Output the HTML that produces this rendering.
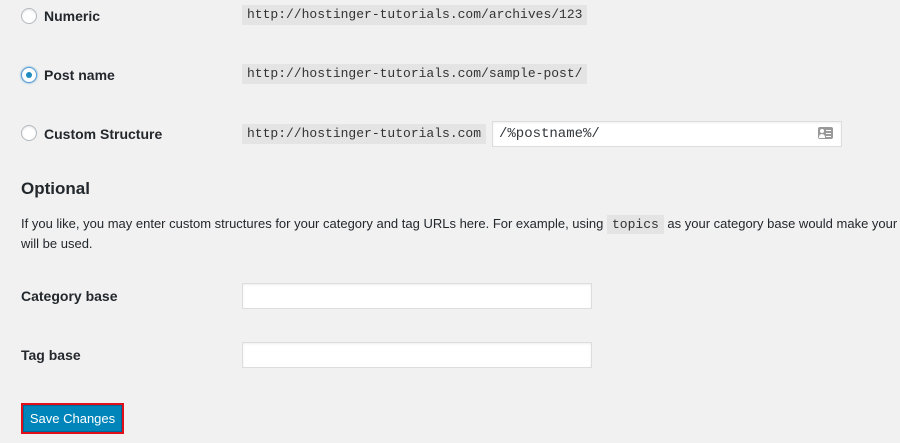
<!DOCTYPE html>
<html><head><style>
body{margin:0;width:900px;height:443px;background:#f1f1f1;font-family:"Liberation Sans","DejaVu Sans",sans-serif;color:#23282d;position:relative;overflow:hidden}
.a{position:absolute}
.radio{width:14px;height:14px;border:1px solid #b4b9be;border-radius:50%;background:#fff;box-shadow:inset 0 1px 2px rgba(0,0,0,.1)}
.radio.on{border-color:#5b9dd9;box-shadow:0 0 2px rgba(30,140,190,.8)}
.radio.on:after{content:"";position:absolute;left:4px;top:4px;width:6px;height:6px;border-radius:50%;background:#1e8cbe}
.lbl{font-weight:bold;font-size:14px;white-space:nowrap}
code{position:absolute;background:#e4e4e4;font-family:"Liberation Mono","DejaVu Sans Mono",monospace;font-size:13px;padding:3px 5px;line-height:14px;white-space:nowrap;color:#333}
.inp{background:#fff;border:1px solid #ddd;box-shadow:inset 0 1px 2px rgba(0,0,0,.07)}
p{margin:0;font-size:13px;line-height:19px;white-space:nowrap}
</style></head><body>
<div class="a radio" style="left:21px;top:8px"></div><div class="a lbl" style="left:44px;top:8px">Numeric</div>
<code style="left:242px;top:5px">http://hostinger-tutorials.com/archives/123</code>
<div class="a radio on" style="left:21px;top:67px"></div><div class="a lbl" style="left:44px;top:67px">Post name</div>
<code style="left:242px;top:64px">http://hostinger-tutorials.com/sample-post/</code>
<div class="a radio" style="left:21px;top:125px"></div><div class="a lbl" style="left:44px;top:126px">Custom Structure</div>
<code style="left:242px;top:124px">http://hostinger-tutorials.com</code>
<div class="a inp" style="left:492px;top:121px;width:348px;height:24px"></div>
<div class="a" style="left:499px;top:126px;font-family:'Liberation Mono','DejaVu Sans Mono',monospace;font-size:14px;color:#32373c">/%postname%/</div>
<div class="a" style="left:818px;top:127px;width:15px;height:12px;background:#999;border-radius:2px;overflow:hidden">
<div class="a" style="left:2px;top:2px;width:4px;height:4px;background:#fff;border-radius:50%"></div>
<div class="a" style="left:1px;top:7px;width:6px;height:4px;background:#fff;border-radius:3px 3px 0 0"></div>
<div class="a" style="left:8px;top:3px;width:5px;height:1px;background:#fff"></div>
<div class="a" style="left:8px;top:6px;width:5px;height:1px;background:#fff"></div>
<div class="a" style="left:8px;top:9px;width:5px;height:1px;background:#fff"></div></div>
<div class="a" style="left:21px;top:179px;font-size:17px;font-weight:bold">Optional</div>
<p class="a" style="left:21px;top:214px">If you like, you may enter custom structures for your category and tag URLs here. For example, using <code style="position:relative;padding:2px 5px">topics</code> as your category base would make your</p>
<p class="a" style="left:21px;top:234px">will be used.</p>
<div class="a lbl" style="left:21px;top:288px">Category base</div>
<div class="a inp" style="left:242px;top:283px;width:348px;height:24px"></div>
<div class="a lbl" style="left:21px;top:347px">Tag base</div>
<div class="a inp" style="left:242px;top:342px;width:348px;height:24px"></div>
<div class="a" style="left:21px;top:403px;width:99px;height:27px;border:2px solid #e0101a;background:#0085ba;box-shadow:inset 0 0 0 1px #006799;color:#fff;font-size:13px;line-height:27px;text-align:center">Save Changes</div>
</body></html>
